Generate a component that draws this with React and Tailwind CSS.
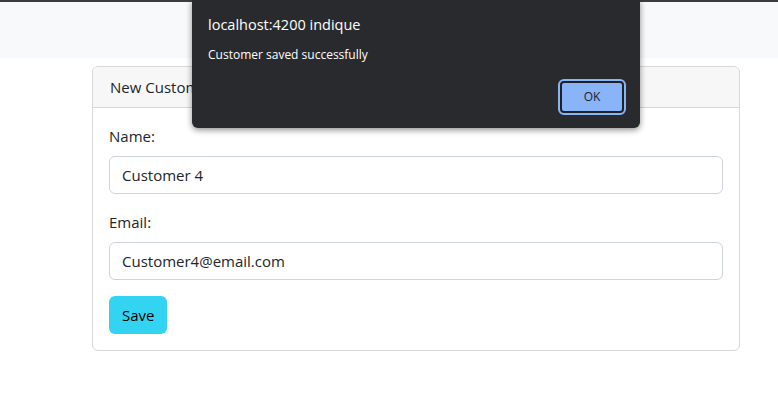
export default function App() {
  return (
    <div
      className="relative w-[778px] h-[410px] bg-white overflow-hidden text-[#212529]"
      style={{ fontFamily: '"Open Sans", "Noto Sans", sans-serif' }}
    >
      <div className="h-[2px] bg-[#3c3c3c]" />
      <div className="h-[56px] bg-[#f8f9fa]" />

      <div className="ml-[92px] mt-[8px] w-[648px] border border-[#d6d8db] rounded-[6px] overflow-hidden">
        <div className="h-[41px] bg-[#f7f7f7] border-b border-[#d6d8db] flex items-center px-[17px] text-[15px]">
          New Customer
        </div>
        <div className="px-[16px] pt-[16px] pb-[16px]">
          <div className="text-[15px] leading-[24px] mb-[8px]">Name:</div>
          <input
            readOnly
            value="Customer 4"
            className="w-full h-[38px] border border-[#ced4da] rounded-[6px] px-[12px] text-[15px] outline-none"
          />
          <div className="text-[15px] leading-[24px] mt-[16px] mb-[8px]">Email:</div>
          <input
            readOnly
            value="Customer4@email.com"
            className="w-full h-[38px] border border-[#ced4da] rounded-[6px] px-[12px] text-[15px] outline-none"
          />
          <button className="mt-[16px] h-[38px] px-[13px] bg-[#33d4f2] rounded-[6px] text-[15px] text-black">
            Save
          </button>
        </div>
      </div>

      <div className="absolute left-[192px] top-0 w-[448px] h-[128px] bg-[#292a2d] rounded-b-[6px] shadow-[0_2px_6px_rgba(0,0,0,0.45)] text-white">
        <div className="pl-[16px] pt-[15px] text-[14.5px] leading-[20px]">localhost:4200 indique</div>
        <div className="pl-[16px] pt-[12px] text-[12px] leading-[16px]">Customer saved successfully</div>
        <div className="flex justify-end pr-[16px] pt-[18px]">
          <button className="w-[64px] h-[32px] bg-[#8ab4f8] rounded-[4px] border-2 border-[#202124] outline outline-2 outline-[#8ab4f8] text-[12px] text-[#202124]">
            OK
          </button>
        </div>
      </div>
    </div>
  );
}
